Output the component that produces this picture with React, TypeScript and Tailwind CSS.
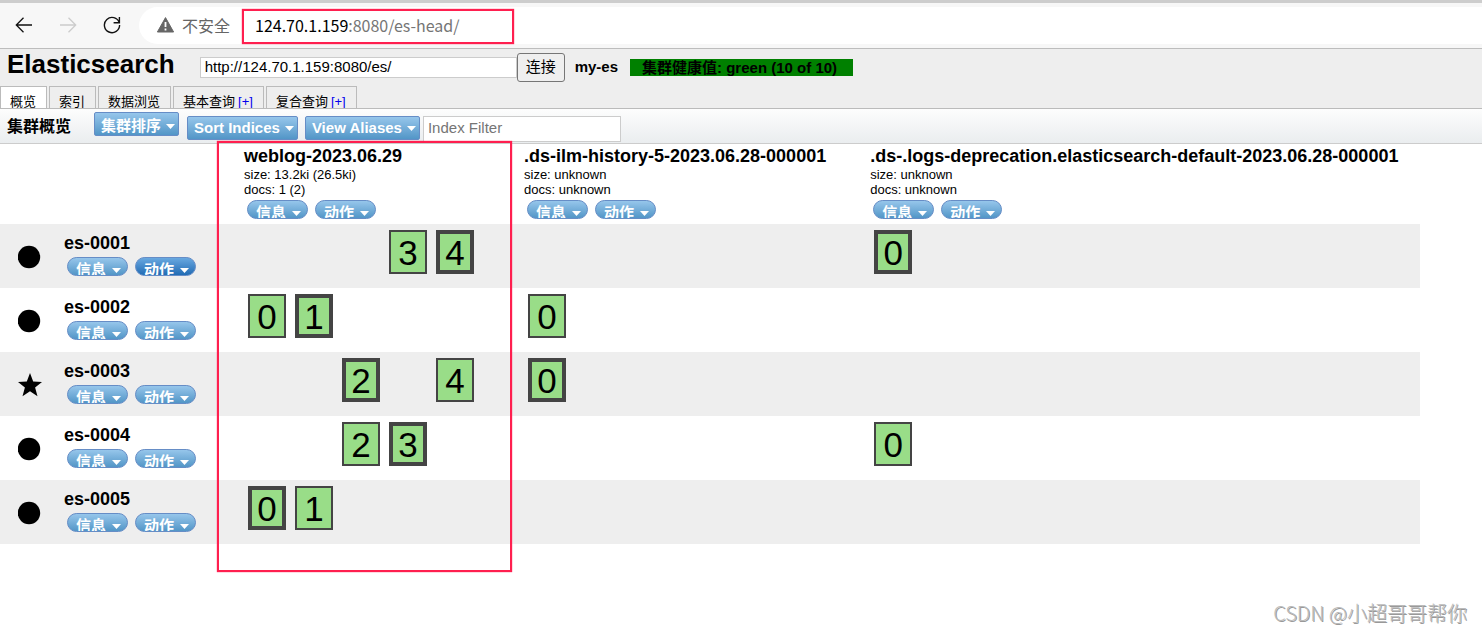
import clsx from "clsx";

type Shard = { id: number; primary?: boolean } | null;

const indices = [
  { name: "weblog-2023.06.29", size: "13.2ki (26.5ki)", docs: "1 (2)" },
  { name: ".ds-ilm-history-5-2023.06.28-000001", size: "unknown", docs: "unknown" },
  {
    name: ".ds-.logs-deprecation.elasticsearch-default-2023.06.28-000001",
    size: "unknown",
    docs: "unknown",
  },
];

const nodes: { name: string; master?: boolean; active?: boolean; shards: Shard[][] }[] = [
  {
    name: "es-0001",
    active: true,
    shards: [[null, null, null, { id: 3 }, { id: 4, primary: true }], [], [{ id: 0, primary: true }]],
  },
  {
    name: "es-0002",
    shards: [[{ id: 0 }, { id: 1, primary: true }], [{ id: 0 }], []],
  },
  {
    name: "es-0003",
    master: true,
    shards: [[null, null, { id: 2, primary: true }, null, { id: 4 }], [{ id: 0, primary: true }], []],
  },
  {
    name: "es-0004",
    shards: [[null, null, { id: 2 }, { id: 3, primary: true }], [], [{ id: 0 }]],
  },
  {
    name: "es-0005",
    shards: [[{ id: 0, primary: true }, { id: 1 }], [], []],
  },
];

const tabs = [
  { label: "概览" },
  { label: "索引" },
  { label: "数据浏览" },
  { label: "基本查询", add: true },
  { label: "复合查询", add: true },
];

const Caret = () => (
  <svg width="9" height="5" viewBox="0 0 9 5" className="shrink-0" aria-hidden="true">
    <path d="M0 0h9L4.5 5z" fill="currentColor" />
  </svg>
);

const PillButton = ({ label, active }: { label: string; active?: boolean }) => (
  <button
    type="button"
    className={clsx(
      "flex h-[19px] w-[61px] items-start gap-[6px] overflow-hidden rounded-full border border-[#668dc6] bg-linear-to-b pt-[3px] pl-2 text-[15px] leading-[18px] font-bold text-white",
      active ? "from-[#68a8e0] to-[#1f6cb4]" : "from-[#96c6eb] to-[#5296c7]"
    )}
  >
    {label}
    <span className="flex h-[18px] items-center">
      <Caret />
    </span>
  </button>
);

const PillGroup = ({ active }: { active?: boolean }) => (
  <div className="flex gap-[7px] pl-[3px]">
    <PillButton label="信息" />
    <PillButton label="动作" active={active} />
  </div>
);

const MenuButton = ({ label, className }: { label: string; className?: string }) => (
  <button
    type="button"
    className={clsx(
      "flex h-6 items-center gap-[5px] rounded-[2px] border border-[#668dc6] bg-linear-to-b from-[#96c6eb] to-[#5296c7] pr-[3px] pl-[6px] text-[15px] leading-[20px] font-bold text-white",
      className
    )}
  >
    {label}
    <Caret />
  </button>
);

const ShardTile = ({ shard }: { shard: Shard }) => {
  if (!shard) return <div className="w-[38px]" />;
  return (
    <div
      className={clsx(
        "flex h-11 w-[38px] items-center justify-center border-[#444] bg-[#99dd88] text-[35px] leading-none",
        shard.primary ? "border-4" : "border-2"
      )}
    >
      {shard.id}
    </div>
  );
};

const BrowserBar = () => (
  <div className="flex h-[49px] items-center border-t-3 border-b border-t-[#cdcdcd] border-b-[#bdbdbd] bg-[#f7f7f7] pl-[15px]">
    <div className="flex gap-[26px] pb-[2px]">
      <button type="button" aria-label="Back">
        <svg width="18" height="18" viewBox="0 0 18 18" fill="none" stroke="#111" strokeWidth="1.3">
          <path d="M17 9H1.5M8.5 1.8 1.3 9l7.2 7.2" />
        </svg>
      </button>
      <button type="button" aria-label="Forward">
        <svg width="18" height="18" viewBox="0 0 18 18" fill="none" stroke="#ccc" strokeWidth="1.3">
          <path d="M1 9h15.5M9.5 1.8 16.7 9l-7.2 7.2" />
        </svg>
      </button>
      <button type="button" aria-label="Reload">
        <svg width="18" height="18" viewBox="0 0 18 18" fill="none" stroke="#111" strokeWidth="1.4">
          <path d="M16.2 6.6A7.6 7.6 0 1 0 16.6 9M16.4 1v5.8h-5.8" />
        </svg>
      </button>
    </div>
    <div className="ml-[18px] flex h-[37px] flex-1 items-center rounded-l-full bg-white pl-[18px] font-['Noto_Sans_CJK_SC',sans-serif] text-base text-[#666]">
      <div className="flex items-center gap-2 pb-[2px]">
        <svg width="17" height="16" viewBox="0 0 17 16" aria-hidden="true">
          <path d="M8.5.6 16.6 15H.4z" fill="#666" stroke="#666" strokeLinejoin="round" />
          <path d="M8.5 5v5M8.5 11.5v2" stroke="#fff" strokeWidth="1.8" />
        </svg>
        <span>不安全</span>
      </div>
      <div className="mt-[2px] ml-3 flex h-[35px] w-[272px] items-center border-2 border-[#ff1f4f] pb-1 pl-[11px] shadow-[0_0_1px_#ff1f4f]">
        <span>
          <span className="text-black">124.70.1.159</span>
          <span className="text-[#757575]">:8080/es-head/</span>
        </span>
      </div>
    </div>
  </div>
);

const Header = () => (
  <header className="bg-[#eee]">
    <div className="flex h-[37px] items-center pl-[7px]">
      <h1 className="self-start text-[26px] leading-[30px] font-bold">Elasticsearch</h1>
      <input
        type="text"
        aria-label="Cluster URL"
        defaultValue="http://124.70.1.159:8080/es/"
        className="ml-[25px] h-[21px] w-[317px] border border-[#ccc] bg-white px-1 text-[15px]"
      />
      <button
        type="button"
        className="h-[29px] rounded-[3px] border border-[#767676] bg-[#efefef] px-2 text-[15px]"
      >
        连接
      </button>
      <span className="ml-[10px] text-[15px] font-bold">my-es</span>
      <span className="ml-3 h-[17px] bg-[#008000] pr-4 pl-3 text-[15px] leading-[17px] font-bold">
        集群健康值: green (10 of 10)
      </span>
    </div>
    <nav className="flex h-[22px] gap-[2px] overflow-hidden">
      {tabs.map((tab, i) => (
        <a
          key={tab.label}
          href="#"
          className={clsx(
            "h-7 border border-[#bbb] pt-[5px] pr-[10px] pl-[9px] text-[13px] leading-5 whitespace-nowrap",
            i === 0 && "bg-white"
          )}
        >
          {tab.label}
          {tab.add && <span className="ml-[3px] text-[#0000ee]">[+]</span>}
        </a>
      ))}
    </nav>
  </header>
);

const Toolbar = () => (
  <div className="flex h-9 items-start border-t border-b border-t-[#bbb] border-b-[#ccc] bg-linear-to-b from-[#fdfdfd] to-[#eaedef] pl-[7px]">
    <h2 className="pt-[7px] text-base leading-[22px] font-bold">集群概览</h2>
    <MenuButton label="集群排序" className="mt-[3px] ml-[23px] pt-1" />
    <MenuButton label="Sort Indices" className="mt-[7px] ml-2" />
    <MenuButton label="View Aliases" className="mt-[7px] ml-[7px]" />
    <input
      type="text"
      aria-label="Index Filter"
      placeholder="Index Filter"
      className="mt-[7px] ml-[3px] h-[26px] w-[198px] border border-[#ccc] bg-white px-1 pb-1 text-[15px] placeholder:text-[#757575]"
    />
  </div>
);

const ClusterTable = () => (
  <table className="border-collapse text-left">
    <thead>
      <tr className="align-top">
        <td colSpan={2} />
        {indices.map((index) => (
          <th key={index.name} className="px-[22px] pt-[2px] pb-[5px] font-normal">
            <h3 className="text-[18px] leading-[21px] font-bold whitespace-nowrap">{index.name}</h3>
            <p className="text-[13px] leading-[15px]">size: {index.size}</p>
            <p className="mb-[3px] text-[13px] leading-[15px]">docs: {index.docs}</p>
            <PillGroup />
          </th>
        ))}
      </tr>
    </thead>
    <tbody>
      {nodes.map((node) => (
        <tr key={node.name} className="h-16 align-top odd:bg-[#eee]">
          <td className="pt-[21px] pr-[22px] pl-[18px]">
            <svg width="24" height="24" viewBox="0 0 24 24" aria-hidden="true">
              {node.master ? (
                <path d="M12 0 15.2 8.4 24 8.9 17.1 14.5 19.5 23.2 12 18.3 4.5 23.2 6.9 14.5 0 8.9 8.8 8.4z" />
              ) : (
                <circle cx="11" cy="12" r="11.2" />
              )}
            </svg>
          </td>
          <td className="w-[158px] pt-[9px]">
            <div className="mb-1 text-[18px] leading-5 font-bold">{node.name}</div>
            <PillGroup active={node.active} />
          </td>
          {node.shards.map((shards, i) => (
            <td key={indices[i].name} className="px-[22px] pt-[6px]">
              <div className={clsx("flex gap-[9px] pl-1", i === 0 && "min-w-[236px]")}>
                {shards.map((shard, slot) => (
                  <ShardTile key={slot} shard={shard} />
                ))}
              </div>
            </td>
          ))}
        </tr>
      ))}
    </tbody>
  </table>
);

const App = () => {
  return (
    <div className="relative min-h-screen bg-white font-['Liberation_Sans','Noto_Sans_CJK_SC',sans-serif] text-black">
      <BrowserBar />
      <Header />
      <Toolbar />
      <ClusterTable />
      <div className="pointer-events-none absolute top-[141px] left-[217px] h-[431px] w-[295px] border-2 border-[#ff1f4f] shadow-[0_0_1px_#ff1f4f]" />
      <div className="absolute right-[15px] bottom-[5px] font-['Noto_Sans_CJK_SC',sans-serif] text-xl font-light text-[#bbb] [text-shadow:1px_1px_0_#999]">
        CSDN @小超哥哥帮你
      </div>
    </div>
  );
};

export default App;
